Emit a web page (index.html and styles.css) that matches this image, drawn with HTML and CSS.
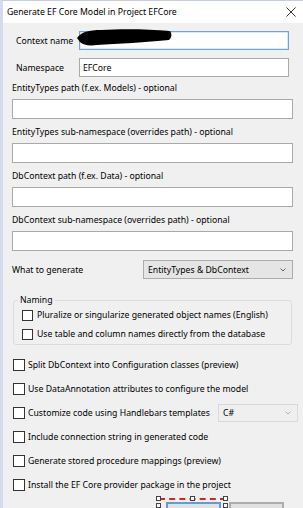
FILE: index.html
```html
<!DOCTYPE html>
<html>
<head>
<meta charset="utf-8">
<link rel="stylesheet" href="styles.css">
</head>
<body>
<div class="window">
  <div class="titlebar">
    <span class="title">Generate EF Core Model in Project EFCore</span>
    <svg class="close" width="10" height="10" viewBox="0 0 10 10"><path d="M0.5 0.5 L9.5 9.5 M9.5 0.5 L0.5 9.5" stroke="#333" stroke-width="1" fill="none"/></svg>
  </div>
  <div class="content">
    <div class="row row-context">
      <label class="lbl">Context name</label>
      <div class="input focused"></div>
      <svg class="scribble" width="96" height="20" viewBox="0 0 96 20"><path d="M0 10 C4 4 12 2 24 2 C44 1 70 1 93 3 C95 5 95 10 92 12 C70 14 40 16 20 17 C12 18 6 17 3 14 Z" fill="#000"/></svg>
    </div>
    <div class="row row-ns">
      <label class="lbl">Namespace</label>
      <div class="input"><span class="val">EFCore</span></div>
    </div>
    <div class="field f1">
      <div class="flabel">EntityTypes path (f.ex. Models) - optional</div>
      <div class="input wide"></div>
    </div>
    <div class="field">
      <div class="flabel">EntityTypes sub-namespace (overrides path) - optional</div>
      <div class="input wide"></div>
    </div>
    <div class="field">
      <div class="flabel">DbContext path (f.ex. Data) - optional</div>
      <div class="input wide"></div>
    </div>
    <div class="field">
      <div class="flabel">DbContext sub-namespace (overrides path) - optional</div>
      <div class="input wide"></div>
    </div>
    <div class="gen-row">
      <span class="gen-label">What to generate</span>
      <div class="select"><span>EntityTypes &amp; DbContext</span><svg width="6" height="4" viewBox="0 0 6 4"><path d="M0.5 0.5 L3 3 L5.5 0.5" stroke="#555" fill="none" stroke-width="0.9"/></svg></div>
    </div>
    <fieldset class="group">
      <legend>Naming</legend>
      <div class="chk-row"><span class="box"></span><span>Pluralize or singularize generated object names (English)</span></div>
      <div class="chk-row"><span class="box"></span><span>Use table and column names directly from the database</span></div>
    </fieldset>
    <div class="options">
      <div class="chk-row"><span class="box"></span><span>Split DbContext into Configuration classes (preview)</span></div>
      <div class="chk-row"><span class="box"></span><span>Use DataAnnotation attributes to configure the model</span></div>
      <div class="chk-row"><span class="box"></span><span>Customize code using Handlebars templates</span>
        <div class="select small disabled"><span>C#</span><svg width="6" height="4" viewBox="0 0 6 4"><path d="M0.5 0.5 L3 3 L5.5 0.5" stroke="#aaa" fill="none" stroke-width="0.9"/></svg></div>
      </div>
      <div class="chk-row"><span class="box"></span><span>Include connection string in generated code</span></div>
      <div class="chk-row"><span class="box"></span><span>Generate stored procedure mappings (preview)</span></div>
      <div class="chk-row"><span class="box"></span><span>Install the EF Core provider package in the project</span></div>
    </div>
    <div class="buttons">
      <div class="btn ok"></div>
      <div class="btn cancel"></div>
      <div class="selection">
        <span class="h h1"></span><span class="h h2"></span><span class="h h3"></span>
        <span class="h h4"></span><span class="h h5"></span>
      </div>
    </div>
  </div>
</div>
</body>
</html>
```
FILE: styles.css
```css
* { box-sizing: border-box; }
html, body { margin: 0; padding: 0; }
body {
  width: 303px;
  height: 508px;
  overflow: hidden;
  font-family: "Noto Sans", "Open Sans", sans-serif;
  font-size: 8.7px;
  color: #000;
  background: #f0f0f0;
  white-space: nowrap;
}
.window {
  width: 303px;
  height: 508px;
  border-left: 3px solid #d3dcea;
  border-top: 1px solid #c5cfdc;
  background: #f0f0f0;
  overflow: hidden;
}
.titlebar {
  height: 22px;
  background: #fff;
  display: flex;
  align-items: center;
  justify-content: space-between;
  padding: 0 7px 0 4px;
}
.title { line-height: 12px; }
.close { width: 10px; height: 10px; }
.row {
  position: relative;
  display: flex;
  align-items: center;
  height: 19px;
}
.row-context { margin-top: 8px; }
.row-ns { margin-top: 8px; }
.lbl { width: 76px; padding-left: 13px; line-height: 12px; }
.input {
  height: 19px;
  background: #fff;
  border: 1px solid #a9a9a9;
  display: flex;
  align-items: center;
}
.row .input { width: 210px; }
.input.focused { border-color: #6aa6e0; box-shadow: inset 0 0 0 0.5px #b7d3f0; }
.val { padding-left: 3px; line-height: 12px; }
.scribble { position: absolute; left: 74px; top: -3px; }
.field { margin-left: 9px; width: 281px; }
.f1 { margin-top: 5px; }
.field + .field { margin-top: 7px; }
.flabel { line-height: 12px; height: 12px; margin-bottom: 5px; }
.input.wide { width: 281px; height: 20px; }
.gen-row {
  display: flex;
  align-items: center;
  justify-content: space-between;
  margin: 9px 0 0 9px;
  width: 281px;
}
.gen-label { line-height: 12px; }
.select {
  width: 150px;
  height: 19px;
  background: #e5e5e5;
  border: 1px solid #acacac;
  display: flex;
  align-items: center;
  justify-content: space-between;
  padding: 0 6px 0 4px;
}
.select span { line-height: 12px; }
.group {
  margin: 16px 0 0 10px;
  width: 279px;
  height: 50px;
  border: 1px solid #dcdcdc;
  border-radius: 3px;
  padding: 4px 0 0 8px;
  position: relative;
}
.group legend { padding: 0 2px 0 2px; margin-left: -4px; line-height: 10px; }
.chk-row {
  display: flex;
  align-items: center;
  height: 12px;
  line-height: 12px;
}
.box {
  width: 12px;
  height: 12px;
  border: 1px solid #333;
  background: #fff;
  margin-right: 5px;
  flex: none;
}
.group .chk-row + .chk-row { margin-top: 7px; }
.group .box { width: 11px; height: 11px; margin-right: 4px; }
.options { margin: 14px 0 0 10px; }
.options .chk-row + .chk-row { margin-top: 12px; }
.options .box { margin-right: 3px; }
.select.small {
  width: 80px;
  height: 18px;
  margin-left: 8px;
  background: #efefef;
  border-color: #d9d9d9;
  flex: none;
}
.buttons {
  position: relative;
  display: flex;
  margin: 11px 0 0 163px;
  gap: 8px;
}
.btn { width: 55px; height: 22px; }
.ok { border: 2px solid #56a0e0; background: #e1e1e1; }
.cancel { border: 2px solid #adadad; background: #e1e1e1; }
.selection {
  position: absolute;
  left: -7px;
  top: -4px;
  width: 67px;
  height: 12px;
  border-top: 2px dashed #d22;
}
.h {
  position: absolute;
  width: 5px;
  height: 5px;
  background: #fff;
  border: 1px solid #444;
}
.h1 { left: -3px; top: -4px; }
.h2 { left: 31px; top: -4px; }
.h3 { left: 64px; top: -4px; }
.h4 { left: -3px; top: 3px; }
.h5 { left: 64px; top: 3px; }
```
